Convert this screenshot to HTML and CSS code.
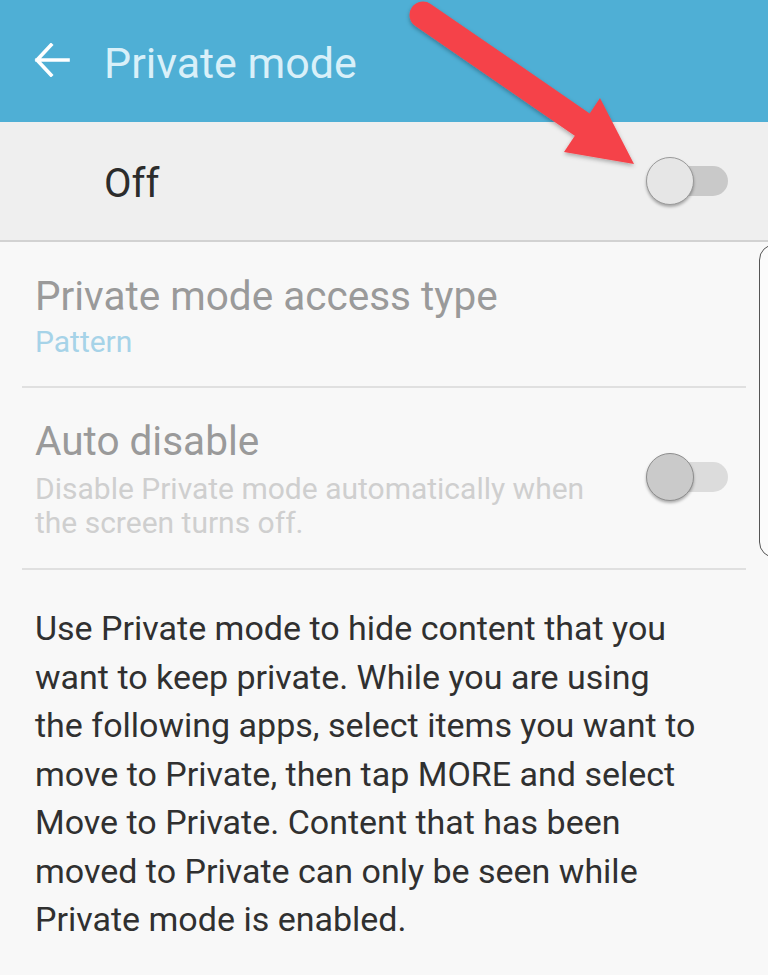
FILE: index.html
```html
<!DOCTYPE html>
<html lang="en">
<head>
  <meta charset="UTF-8">
  <meta name="viewport" content="width=device-width, initial-scale=1.0">
  <title>Private mode</title>
  <link rel="stylesheet" href="styles.css">
</head>
<body>

  <div class="screen">
    <div class="appbar">
      <svg class="back" width="36" height="34" viewBox="0 0 36 34">
        <path d="M34 17 H3 M17 2 L3 17 L17 32" fill="none" stroke="#ffffff" stroke-width="3.6" stroke-linecap="square"/>
      </svg>
      <h1>Private mode</h1>
    </div>

    <div class="master">
      <span>Off</span>
      <div class="switch"><div class="knob"></div></div>
    </div>

    <div class="list">
      <div class="item access">
        <div class="item-text">
          <div class="item-title">Private mode access type</div>
          <div class="item-value">Pattern</div>
        </div>
      </div>

      <div class="item auto">
        <div class="item-text">
          <div class="item-title">Auto disable</div>
          <div class="item-sub">Disable Private mode automatically when the screen turns off.</div>
        </div>
        <div class="switch disabled"><div class="knob"></div></div>
      </div>

      <p class="info">Use Private mode to hide content that you<br>
        want to keep private. While you are using<br>
        the following apps, select items you want to<br>
        move to Private, then tap MORE and select<br>
        Move to Private. Content that has been<br>
        moved to Private can only be seen while<br>
        Private mode is enabled.</p>
    </div>

    <div class="edge"></div>

    <!-- pointer drawn over the top bar -->
    <svg class="pointer" width="768" height="200" viewBox="0 0 768 200">
      <defs>
        <filter id="shade" x="-10%" y="-10%" width="120%" height="130%">
          <feDropShadow dx="0" dy="2" stdDeviation="2" flood-color="#000" flood-opacity="0.3"/>
        </filter>
      </defs>
      <g filter="url(#shade)" fill="#f5434a">
        <line x1="423" y1="15" x2="590" y2="130" stroke="#f5434a" stroke-width="27" stroke-linecap="round"/>
        <polygon points="600,98 634,164 564,152"/>
      </g>
    </svg>
  </div>

</body>
</html>
```

FILE: styles.css
```css
body {
  margin: 0;
  font-family: Roboto, "Noto Sans", sans-serif;
  background: #f8f8f8;
}

.screen {
  position: relative;
  width: 768px;
  height: 975px;
  overflow: hidden;
  background: #f8f8f8;
}

.appbar {
  height: 122px;
  background: #4fafd5;
  display: flex;
  align-items: center;
  padding: 4px 0 0 34px;
  box-sizing: border-box;
}

.back {
  margin-top: -6px;
}

.appbar h1 {
  margin: 0 0 0 34px;
  font-weight: normal;
  font-size: 43px;
  color: #d9f0f9;
}

.master {
  height: 120px;
  background: #efefef;
  border-bottom: 2px solid #d2d2d2;
  box-sizing: border-box;
  display: flex;
  align-items: center;
  justify-content: space-between;
  padding: 0 40px 0 104px;
}

.master span {
  font-size: 40px;
  color: #2c2c2c;
  margin-top: 4px;
}

.switch {
  position: relative;
  width: 82px;
  height: 30px;
}

.switch::before {
  content: "";
  position: absolute;
  left: 22px;
  right: 0;
  top: 0;
  height: 30px;
  border-radius: 15px;
  background: #c9c9c9;
}

.knob {
  position: absolute;
  left: 0;
  top: -9px;
  width: 46px;
  height: 46px;
  border-radius: 50%;
  background: #e6e6e6;
  border: 1px solid #9a9a9a;
  box-shadow: 0 2px 3px rgba(0, 0, 0, 0.3);
}

.switch.disabled {
  margin-top: -4px;
}

.switch.disabled::before {
  background: #dcdcdc;
}

.switch.disabled .knob {
  background: #cacaca;
  border-color: #8e8e8e;
}

.list {
  padding: 0 22px;
}

.item {
  display: flex;
  align-items: center;
  justify-content: space-between;
  border-bottom: 2px solid #e0e0e0;
  padding: 0 18px 0 13px;
}

.item.access {
  padding-top: 31px;
  padding-bottom: 26px;
}

.item.auto {
  padding-top: 30px;
  padding-bottom: 28px;
}

.item-title {
  font-size: 40.5px;
  line-height: 46px;
  color: #9a9a9a;
}

.item-value {
  font-size: 30px;
  line-height: 36px;
  color: #a6d3e8;
  margin-top: 5px;
}

.item-sub {
  font-size: 30px;
  color: #cfcfcf;
  line-height: 34px;
  width: 560px;
  margin-top: 8px;
}

.info {
  margin: 34px 0 0;
  padding: 0 13px;
  font-size: 34px;
  line-height: 48.5px;
  color: #303030;
  white-space: nowrap;
}

.edge {
  position: absolute;
  left: 759px;
  top: 244px;
  width: 30px;
  height: 312px;
  border: 1.5px solid #555555;
  border-radius: 18px;
  background: #fbfbfb;
}

.pointer {
  position: absolute;
  left: 0;
  top: 0;
}
```
